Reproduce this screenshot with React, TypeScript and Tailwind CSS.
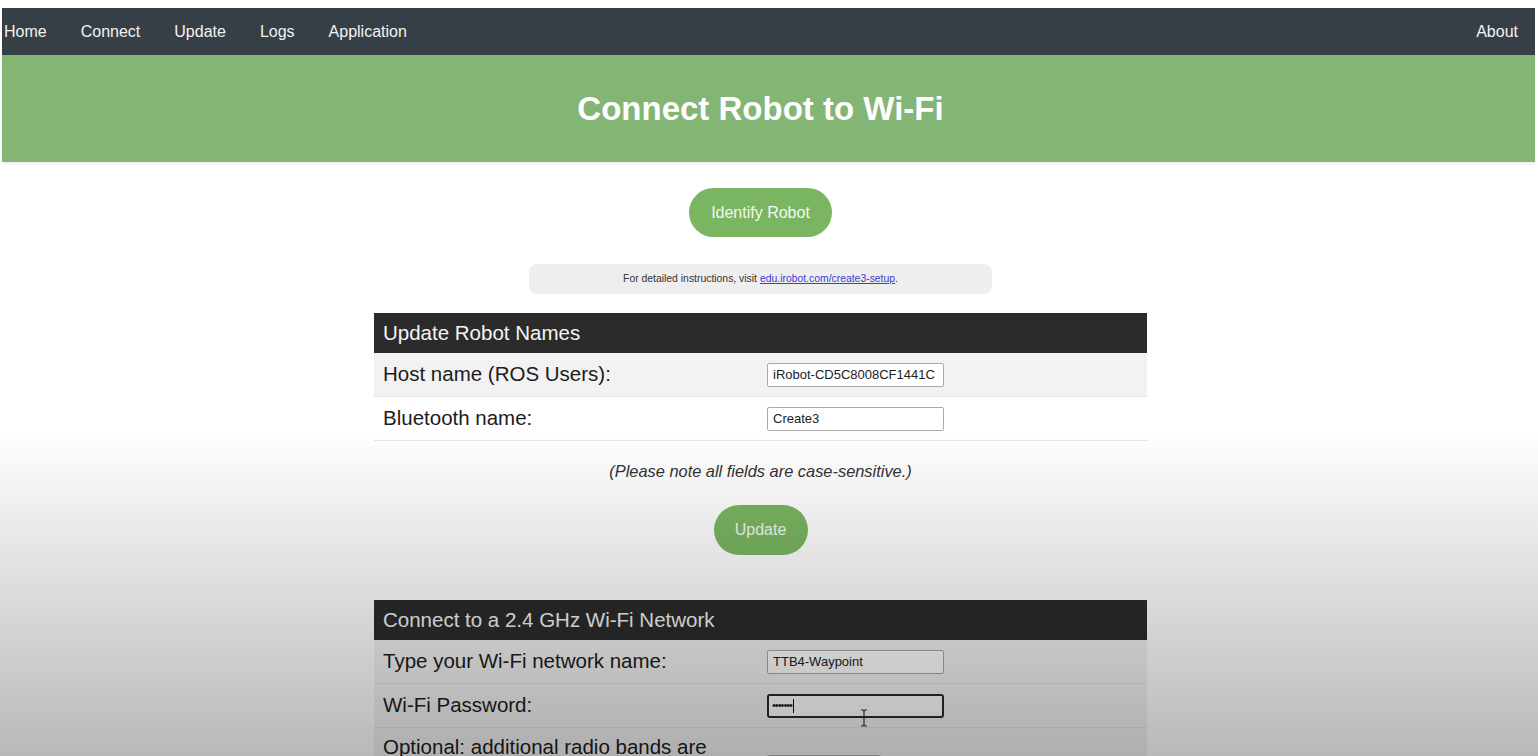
import React from 'react'

const font = { fontFamily: '"Liberation Sans", Arial, sans-serif' }

function NavBar() {
    const items = ['Home', 'Connect', 'Update', 'Logs', 'Application']
    return (
        <nav className="flex h-[47px] items-center justify-between bg-[#373f46] text-[16px] text-[#f2f2f2]">
            <div className="flex items-center gap-[34px] pl-[2px]">
                {items.map((item) => (
                    <a key={item} className="cursor-pointer">{item}</a>
                ))}
            </div>
            <a className="cursor-pointer pr-[17px]">About</a>
        </nav>
    )
}

type Row = {
    label: string
    value: string
    type?: 'text' | 'password'
    focused?: boolean
    tall?: boolean
    bg: string
}

function FormTable({ title, rows }: { title: string; rows: Row[] }) {
    return (
        <div className="w-[773px]">
            <div className="flex h-[40px] items-center bg-[#2b2b2b] pl-[9px] text-[20.5px] text-[#f4f4f4]">{title}</div>
            {rows.map((row) => (
                <div
                    key={row.label}
                    className={`flex border-b border-[#e4e4e4] pl-[9px] text-[20.5px] text-[#1c1c1c] ${row.bg} ${
                        row.tall ? 'h-[70px] items-start pt-[4px]' : 'h-[44px] items-center'
                    }`}
                >
                    <span className="w-[384px]">{row.label}</span>
                    {row.focused ? (
                        <div className="flex h-[24px] w-[177px] items-center rounded-[3px] border-2 border-[#2a2a2a] bg-white pl-[3px] text-[11px] text-[#222]">
                            <span className="tracking-[-1px]">{row.value}</span>
                            <span className="ml-[1px] h-[14px] w-[1px] bg-[#111]" />
                        </div>
                    ) : (
                        <input
                            readOnly
                            value={row.value}
                            type={row.type ?? 'text'}
                            className={`h-[24px] rounded-[2px] border border-[#a9a9a9] bg-white px-[5px] text-[13px] text-[#222] outline-none ${
                                row.tall ? 'mt-[23px] w-[114px]' : 'w-[177px]'
                            }`}
                            style={font}
                        />
                    )}
                </div>
            ))}
        </div>
    )
}

export default function App() {
    return (
        <div className="relative h-[756px] overflow-hidden bg-white" style={font}>
            <div className="pt-[8px] pl-[2px] pr-[3px]">
                <NavBar />
                <header className="flex h-[107px] items-center justify-center bg-[#83b574] pr-[16px] shadow-[0_2px_3px_rgba(0,0,0,0.08)]">
                    <h1 className="text-[33px] font-bold text-white">Connect Robot to Wi-Fi</h1>
                </header>
                <main className="flex flex-col items-center pr-[16px]">
                    <button className="mt-[26px] h-[49px] w-[143px] rounded-full bg-[#7ab661] text-[16px] text-[#f2f6ef]">
                        Identify Robot
                    </button>
                    <div className="mt-[27px] flex h-[30px] w-[463px] items-center justify-center rounded-[8px] bg-[#eeeeee] text-[10.4px] text-[#333]">
                        For detailed instructions, visit&nbsp;
                        <a className="text-[#3b3bd6] underline">edu.irobot.com/create3-setup</a>.
                    </div>
                    <div className="mt-[19px]">
                        <FormTable
                            title="Update Robot Names"
                            rows={[
                                { label: 'Host name (ROS Users):', value: 'iRobot-CD5C8008CF1441C', bg: 'bg-[#f2f2f2]' },
                                { label: 'Bluetooth name:', value: 'Create3', bg: 'bg-white' },
                            ]}
                        />
                    </div>
                    <p className="mt-[20px] text-[16.4px] leading-[20px] italic text-[#333]">(Please note all fields are case-sensitive.)</p>
                    <button className="mt-[24px] h-[50px] w-[94px] rounded-full bg-[#7ab661] text-[16px] text-[#f2f6ef]">
                        Update
                    </button>
                    <div className="mt-[45px]">
                        <FormTable
                            title="Connect to a 2.4 GHz Wi-Fi Network"
                            rows={[
                                { label: 'Type your Wi-Fi network name:', value: 'TTB4-Waypoint', bg: 'bg-[#f2f2f2]' },
                                { label: 'Wi-Fi Password:', value: '•••••••', focused: true, bg: 'bg-[#f2f2f2]' },
                                { label: 'Optional: additional radio bands are', value: '', tall: true, bg: 'bg-[#f2f2f2]' },
                            ]}
                        />
                    </div>
                </main>
            </div>
            <svg className="pointer-events-none absolute left-[859px] top-[709px]" width="10" height="18" viewBox="0 0 10 18">
                <path d="M2 1h2l1 1 1-1h2M5 2v14M2 17h2l1-1 1 1h2" stroke="#333" strokeWidth="1.2" fill="none" />
            </svg>
            <div className="pointer-events-none absolute inset-0 bg-[linear-gradient(to_bottom,transparent_430px,rgba(0,0,0,0.28)_756px)]" />
        </div>
    )
}
